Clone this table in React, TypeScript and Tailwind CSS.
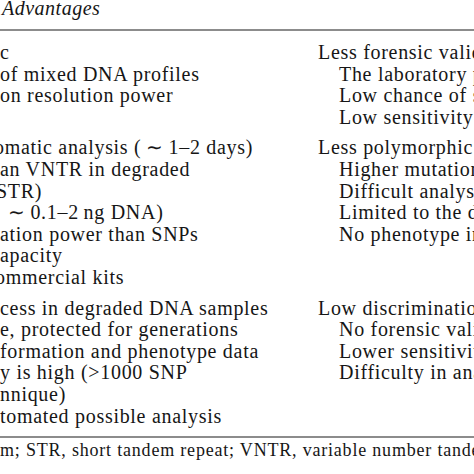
const rows = [
  {
    left: [
      { text: "c", cls: "" },
      { text: "of mixed DNA profiles", cls: "" },
      { text: "on resolution power", cls: "" },
    ],
    right: [
      { text: "Less forensic validation", sub: false },
      { text: "The laboratory procedure", sub: true },
      { text: "Low chance of success", sub: true },
      { text: "Low sensitivity", sub: true },
    ],
  },
  {
    left: [
      { text: "omatic analysis (\u2009\u223C\u20091–2 days)", cls: "-ml-[6px]" },
      { text: "an VNTR in degraded", cls: "" },
      { text: "STR)", cls: "-ml-[4px]" },
      { text: "\u223C\u20090.1–2\u2009ng DNA)", cls: "pl-[8px]" },
      { text: "ation power than SNPs", cls: "" },
      { text: "apacity", cls: "" },
      { text: "ommercial kits", cls: "-ml-[5px]" },
    ],
    right: [
      { text: "Less polymorphic", sub: false },
      { text: "Higher mutation rate", sub: true },
      { text: "Difficult analysis", sub: true },
      { text: "Limited to the detection", sub: true },
      { text: "No phenotype information", sub: true },
    ],
  },
  {
    left: [
      { text: "cess in degraded DNA samples", cls: "" },
      { text: "e, protected for generations", cls: "" },
      { text: "formation and phenotype data", cls: "" },
      { text: "y is high (>1000 SNP", cls: "" },
      { text: "nnique)", cls: "" },
      { text: "tomated possible analysis", cls: "" },
    ],
    right: [
      { text: "Low discrimination", sub: false },
      { text: "No forensic validation", sub: true },
      { text: "Lower sensitivity", sub: true },
      { text: "Difficulty in analysis", sub: true },
    ],
  },
];

export default function App() {
  return (
    <div
      className="w-[474px] h-[474px] overflow-hidden bg-white text-[#161616] whitespace-nowrap"
      style={{ fontFamily: '"Liberation Serif", "Times New Roman", serif' }}
    >
      <div className="-mt-[2px] pl-[2px] text-[20px] leading-[21.6px] italic tracking-[0.5px]">Advantages</div>
      <div className="mt-[9px] h-[2px] bg-[#8c8c8c]" />

      <div className="pt-[11.5px] pb-[8.5px] flex flex-col gap-[9px] text-[20px] leading-[21.6px] tracking-[0.7px]">
        {rows.map((row, i) => (
          <div key={i} className="flex">
            <div className="w-[318px] shrink-0 flex flex-col">
              {row.left.map((l, j) => (
                <div key={j} className={l.cls}>{l.text}</div>
              ))}
            </div>
            <div className="flex-1 flex flex-col">
              {row.right.map((r, j) => (
                <div key={j} className={r.sub ? "pl-[21px]" : ""}>{r.text}</div>
              ))}
            </div>
          </div>
        ))}
      </div>

      <div className="h-[2px] bg-[#8c8c8c]" />
      <div className="pt-[2px] text-[18px] leading-[20px] tracking-[0.8px]">
        m; STR, short tandem repeat; VNTR, variable number tandem repeat
      </div>
    </div>
  );
}
